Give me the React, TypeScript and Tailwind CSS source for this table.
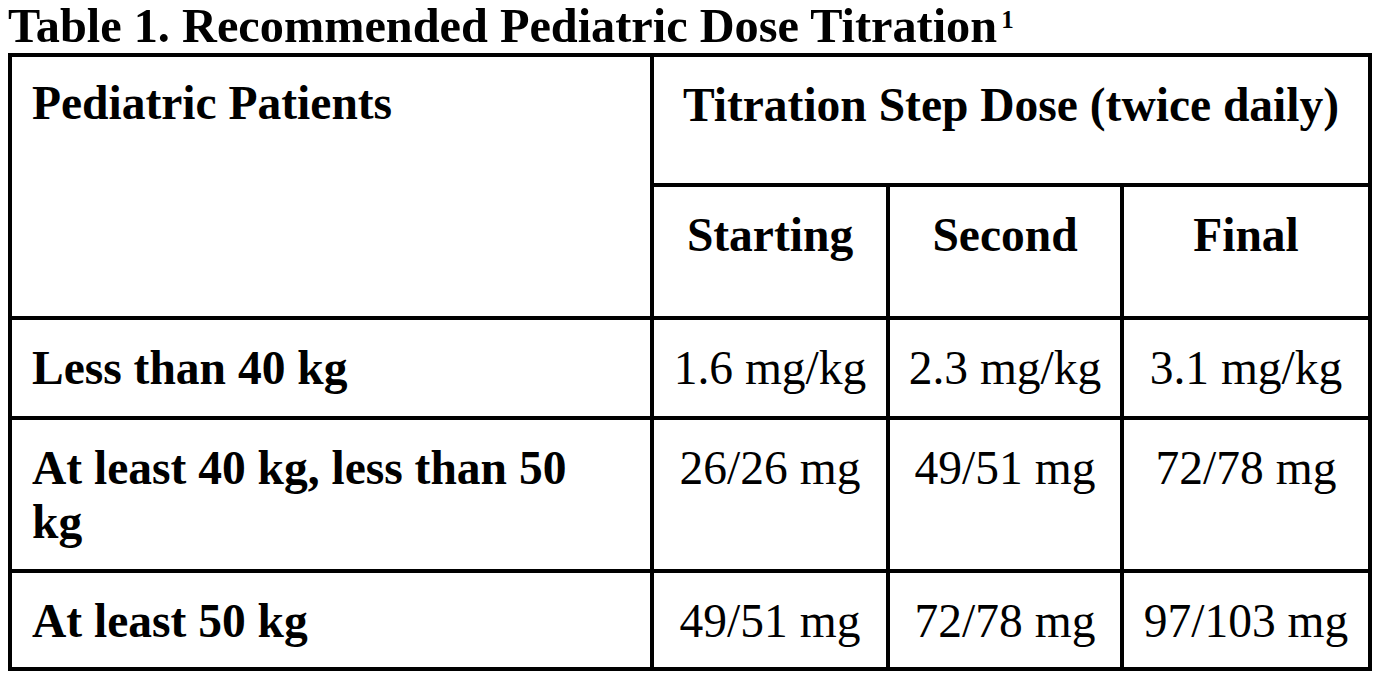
import React from 'react';

interface DoseRow {
  label: string;
  doses: [string, string, string];
}

const rows: DoseRow[] = [
  { label: 'Less than 40 kg', doses: ['1.6 mg/kg', '2.3 mg/kg', '3.1 mg/kg'] },
  { label: 'At least 40 kg, less than 50 kg', doses: ['26/26 mg', '49/51 mg', '72/78 mg'] },
  { label: 'At least 50 kg', doses: ['49/51 mg', '72/78 mg', '97/103 mg'] },
];

export default function App() {
  return (
    <div
      className="min-h-screen w-full bg-white px-[8px] text-black text-[47.5px] leading-[54px]"
      style={{ fontFamily: '"Liberation Serif", "Times New Roman", serif' }}
    >
      {/* Caption */}
      <div className="flex h-[53px] items-baseline font-bold text-[48.3px] leading-[52px] whitespace-nowrap">
        <span>Table 1. Recommended Pediatric Dose Titration</span>
        <span className="relative top-[-14px] ml-[4px] text-[25px] leading-[25px]">1</span>
      </div>

      {/* Table: black background + gaps draw the rules */}
      <div className="grid w-[1364px] grid-cols-[638px_232px_230px_244px] grid-rows-[126px_129px_96px_149px_94px] gap-[4px] bg-black p-[4px]">
        <div className="row-span-2 bg-white pl-[20px] pt-[19px] font-bold">Pediatric Patients</div>
        <div className="col-span-3 bg-white pt-[21px] text-center font-bold whitespace-nowrap">
          Titration Step Dose (twice daily)
        </div>
        <div className="bg-white pt-[21px] text-center font-bold">Starting</div>
        <div className="bg-white pt-[21px] text-center font-bold">Second</div>
        <div className="bg-white pt-[21px] text-center font-bold">Final</div>

        {rows.map((row) => (
          <React.Fragment key={row.label}>
            <div className="bg-white pl-[20px] pr-[64px] pt-[21px] font-bold">{row.label}</div>
            {row.doses.map((d, i) => (
              <div key={i} className="bg-white pt-[21px] text-center whitespace-nowrap">
                {d}
              </div>
            ))}
          </React.Fragment>
        ))}
      </div>
    </div>
  );
}
